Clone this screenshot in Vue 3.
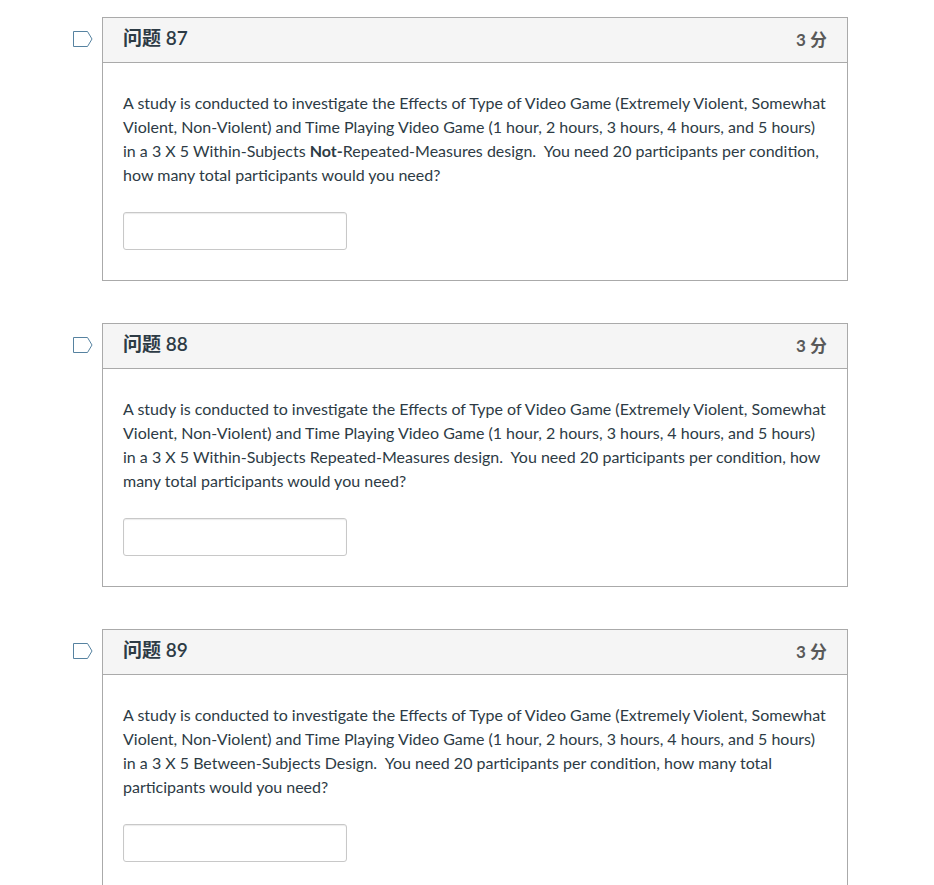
<template>
  <main class="quiz">
    <section v-for="question in questions" :key="question.number" class="question-row">
      <button
        class="flag-btn"
        :aria-label="`标记问题 ${question.number}`"
        :aria-pressed="question.flagged"
        @click="toggleFlag(question)"
      >
        <svg class="flag-icon" :class="{ flagged: question.flagged }" width="21" height="16" viewBox="0 0 21 16">
          <path d="M1.5 0.5H15.5L20 8L15.5 15.5H1.5Z" />
        </svg>
      </button>
      <div class="question">
        <div class="question-header">
          <h2 :id="`question-${question.number}`" class="question-name">问题 {{ question.number }}</h2>
          <span class="question-points">{{ question.points }} 分</span>
        </div>
        <div class="question-body">
          <p :id="`text-${question.number}`" class="question-text">
            <template v-for="(part, index) in question.parts" :key="index">
              <strong v-if="part.strong">{{ part.text }}</strong>
              <template v-else>{{ part.text }}</template>
            </template>
          </p>
          <input
            v-model="question.answer"
            type="text"
            class="answer-input"
            autocomplete="off"
            :aria-labelledby="`question-${question.number}`"
            :aria-describedby="`text-${question.number}`"
          />
        </div>
      </div>
    </section>
  </main>
</template>

<script setup>
import { ref } from 'vue'

const intro = 'A study is conducted to investigate the Effects of Type of Video Game (Extremely Violent, Somewhat Violent, Non-Violent) and Time Playing Video Game (1 hour, 2 hours, 3 hours, 4 hours, and 5 hours) in a 3 X 5'
const ending = '\u00a0 You need 20 participants per condition, how many total participants would you need?'

const questions = ref([
  {
    number: 87,
    points: 3,
    parts: [
      { text: `${intro} Within-Subjects ` },
      { text: 'Not-', strong: true },
      { text: `Repeated-Measures design.${ending}` }
    ],
    answer: '',
    flagged: false
  },
  {
    number: 88,
    points: 3,
    parts: [{ text: `${intro} Within-Subjects Repeated-Measures design.${ending}` }],
    answer: '',
    flagged: false
  },
  {
    number: 89,
    points: 3,
    parts: [{ text: `${intro} Between-Subjects Design.${ending}` }],
    answer: '',
    flagged: false
  }
])

function toggleFlag(question) {
  question.flagged = !question.flagged
}
</script>

<style>
body {
  margin: 0;
  background: #fff;
}
</style>

<style scoped>
.quiz {
  display: flex;
  flex-direction: column;
  gap: 42px;
  padding: 17px 86px 0 72px;
  font-family: Lato, "Noto Sans CJK SC", sans-serif;
  font-size: 16px;
  line-height: 24px;
  color: #2d3b45;
}

.question-row {
  display: flex;
  align-items: flex-start;
  gap: 9px;
}

.flag-btn {
  flex: none;
  display: block;
  margin: 14px 0 0;
  padding: 0;
  border: none;
  background: none;
  cursor: pointer;
}

.flag-icon {
  display: block;
  fill: none;
  stroke: #5682a0;
  stroke-width: 1;
}

.flag-icon.flagged {
  fill: #fc5e13;
}

.question {
  flex: 1;
  min-width: 0;
  border: 1px solid #aaa;
}

.question-header {
  display: flex;
  justify-content: space-between;
  align-items: center;
  box-sizing: border-box;
  height: 45px;
  padding: 0 20px;
  background: #f5f5f5;
  border-bottom: 1px solid #aaa;
}

.question-name {
  margin: 0 0 4px;
  font-size: 19px;
  font-weight: 600;
}

.question-points {
  font-size: 17px;
  font-weight: bold;
  color: #595959;
}

.question-body {
  padding: 28px 20px 30px;
}

.question-text {
  margin: 0 0 25px;
}

.answer-input {
  display: block;
  box-sizing: border-box;
  width: 224px;
  max-width: 100%;
  height: 38px;
  padding: 8px;
  border: 1px solid #c8c8c8;
  border-radius: 3px;
  box-shadow: inset 0 1px 1px rgba(0, 0, 0, 0.08);
  font: inherit;
  color: inherit;
}
</style>
